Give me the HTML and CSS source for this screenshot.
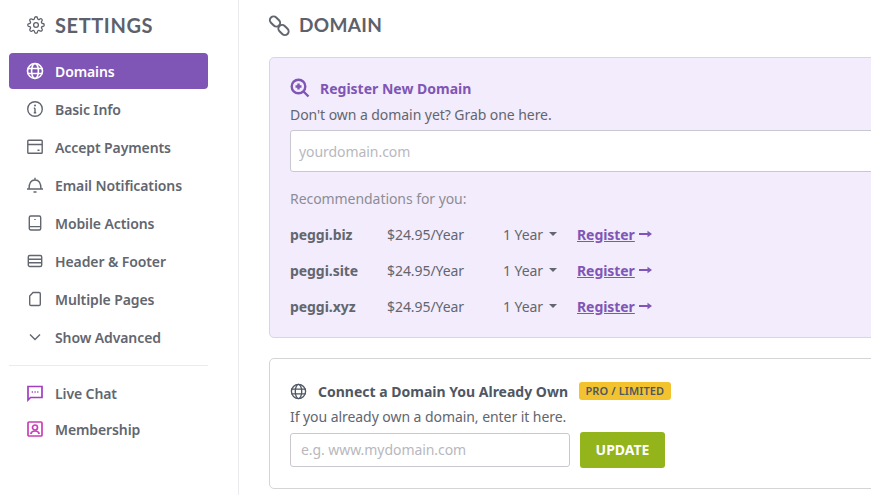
FILE: index.html
```html
<!DOCTYPE html>
<html lang="en">
<head>
<meta charset="utf-8">
<title>Settings - Domain</title>
<link rel="stylesheet" href="styles.css">
</head>
<body>
<div class="page">
  <aside class="sidebar">
    <h1 class="side-title">
      <svg class="ic title-ic" viewBox="0 0 24 24"><circle cx="12" cy="12" r="3.200"/><path d="M19.400 15a1.650 1.650 0 0 0 .33 1.820l.06.06a2 2 0 0 1 0 2.830 2 2 0 0 1-2.830 0l-.06-.06a1.650 1.650 0 0 0-1.820-.33 1.650 1.650 0 0 0-1 1.510V21a2 2 0 0 1-2 2 2 2 0 0 1-2-2v-.09A1.650 1.650 0 0 0 9 19.400a1.650 1.650 0 0 0-1.820.33l-.06.06a2 2 0 0 1-2.830 0 2 2 0 0 1 0-2.830l.06-.06a1.650 1.650 0 0 0 .33-1.820 1.650 1.650 0 0 0-1.510-1H3a2 2 0 0 1-2-2 2 2 0 0 1 2-2h.09A1.650 1.650 0 0 0 4.600 9a1.650 1.650 0 0 0-.33-1.820l-.06-.06a2 2 0 0 1 0-2.830 2 2 0 0 1 2.830 0l.06.06a1.650 1.650 0 0 0 1.820.33H9a1.650 1.650 0 0 0 1-1.510V3a2 2 0 0 1 2-2 2 2 0 0 1 2 2v.09a1.650 1.650 0 0 0 1 1.510 1.650 1.650 0 0 0 1.820-.33l.06-.06a2 2 0 0 1 2.830 0 2 2 0 0 1 0 2.830l-.06.06a1.650 1.650 0 0 0-.33 1.820V9a1.650 1.650 0 0 0 1.510 1H21a2 2 0 0 1 2 2 2 2 0 0 1-2 2h-.09a1.650 1.650 0 0 0-1.510 1z"/></svg>
      <span>SETTINGS</span>
    </h1>
    <nav class="nav">
      <a class="nav-item active">
        <svg class="ic ic-bold" viewBox="0 0 18 18"><circle cx="9" cy="9" r="7.500"/><ellipse cx="9" cy="9" rx="3.400" ry="7.500"/><path d="M1.500 6.500h15M1.500 11.500h15"/></svg>
        <span>Domains</span>
      </a>
      <a class="nav-item">
        <svg class="ic" viewBox="0 0 18 18"><circle cx="9" cy="9" r="7.300"/><path d="M9 8.200v4.600M7.800 8.200H9M7.800 12.800h2.400"/><circle class="dot" cx="9" cy="5.500" r="1"/></svg>
        <span>Basic Info</span>
      </a>
      <a class="nav-item">
        <svg class="ic" viewBox="0 0 18 18"><rect x="1.800" y="2.200" width="14.400" height="13" rx=".8"/><path d="M1.800 6.500h14.400M11.500 12.300h2"/></svg>
        <span>Accept Payments</span>
      </a>
      <a class="nav-item">
        <svg class="ic" viewBox="0 0 18 18"><path d="M1 13h16M3 13C3 7 5 4 9 4s6 3 6 9M9 1.800V4M7.500 16h3"/></svg>
        <span>Email Notifications</span>
      </a>
      <a class="nav-item">
        <svg class="ic" viewBox="0 0 18 18"><rect x="3.300" y="2" width="11.400" height="14" rx="1.500"/><path d="M3.300 12.600h11.400M9 5v1"/></svg>
        <span>Mobile Actions</span>
      </a>
      <a class="nav-item">
        <svg class="ic" viewBox="0 0 18 18"><rect x="2.300" y="3.500" width="13.400" height="11" rx="1.500"/><path d="M2.300 7.200h13.400M2.300 10.800h13.400"/></svg>
        <span>Header &amp; Footer</span>
      </a>
      <a class="nav-item">
        <svg class="ic" viewBox="0 0 18 18"><path d="M7 2.500h6a1.300 1.300 0 0 1 1.300 1.300v10.400a1.300 1.300 0 0 1-1.300 1.300H5a1.300 1.300 0 0 1-1.300-1.300V6z"/></svg>
        <span>Multiple Pages</span>
      </a>
      <a class="nav-item">
        <svg class="ic" viewBox="0 0 18 18"><path d="M4 6.500l5 5 5-5"/></svg>
        <span>Show Advanced</span>
      </a>
    </nav>
    <hr class="side-rule">
    <nav class="nav nav-extra">
      <a class="nav-item">
        <svg class="ic ic-chat" viewBox="0 0 18 18"><path d="M2 2.500h14v11H4.500L2 16z"/><path class="dots" d="M5.800 8h.9M8.600 8h.9M11.400 8h.9"/></svg>
        <span>Live Chat</span>
      </a>
      <a class="nav-item">
        <svg class="ic ic-member" viewBox="0 0 18 18"><rect x="2" y="2" width="14" height="14" rx="1"/><circle cx="9" cy="7.500" r="2.500"/><path d="M4.800 14c.4-2 2-3 4.200-3s3.800 1 4.200 3"/></svg>
        <span>Membership</span>
      </a>
    </nav>
  </aside>
  <main class="main">
    <h2 class="main-title">
      <svg class="link-ic" viewBox="0 0 21 21"><rect x="-5.700" y="-3.700" width="11.400" height="7.400" rx="3.700" transform="translate(6 6.500) rotate(45)"/><rect x="-5.700" y="-3.700" width="11.400" height="7.400" rx="3.700" transform="translate(14.500 15) rotate(45)"/></svg>
      <span>DOMAIN</span>
    </h2>
    <section class="card card-purple">
      <h3 class="card-head head-purple">
        <svg class="search-ic" viewBox="0 0 20 20"><circle cx="8.500" cy="8.500" r="6.800"/><path d="M13.500 13.500l5 5M8.500 5.500v6M5.500 8.500h6"/></svg>
        <span>Register New Domain</span>
      </h3>
      <p class="sub">Don't own a domain yet? Grab one here.</p>
      <input class="field field-wide" type="text" placeholder="yourdomain.com">
      <p class="rec-title">Recommendations for you:</p>
      <div class="rec-row">
        <b class="rec-name">peggi.biz</b><span class="rec-price">$24.95/Year</span>
        <span class="rec-term">1 Year<i class="caret"></i></span>
        <span class="rec-action"><a class="reg">Register</a><svg class="arrow" viewBox="0 0 13 8"><path d="M0 4h10"/><path class="arrow-head" d="M8.500 .8L13 4 8.500 7.200z"/></svg></span>
      </div>
      <div class="rec-row">
        <b class="rec-name">peggi.site</b><span class="rec-price">$24.95/Year</span>
        <span class="rec-term">1 Year<i class="caret"></i></span>
        <span class="rec-action"><a class="reg">Register</a><svg class="arrow" viewBox="0 0 13 8"><path d="M0 4h10"/><path class="arrow-head" d="M8.500 .8L13 4 8.500 7.200z"/></svg></span>
      </div>
      <div class="rec-row">
        <b class="rec-name">peggi.xyz</b><span class="rec-price">$24.95/Year</span>
        <span class="rec-term">1 Year<i class="caret"></i></span>
        <span class="rec-action"><a class="reg">Register</a><svg class="arrow" viewBox="0 0 13 8"><path d="M0 4h10"/><path class="arrow-head" d="M8.500 .8L13 4 8.500 7.200z"/></svg></span>
      </div>
    </section>
    <section class="card card-plain">
      <h3 class="card-head head-dark">
        <svg class="ic globe-ic" viewBox="0 0 18 18"><circle cx="9" cy="9" r="7.500"/><ellipse cx="9" cy="9" rx="3.400" ry="7.500"/><path d="M1.500 6.500h15M1.500 11.500h15"/></svg>
        <span>Connect a Domain You Already Own</span>
        <em class="badge">PRO / LIMITED</em>
      </h3>
      <p class="sub sub-plain">If you already own a domain, enter it here.</p>
      <div class="connect-row">
        <input class="field field-small" type="text" placeholder="e.g. www.mydomain.com">
        <button class="btn" type="button">UPDATE</button>
      </div>
    </section>
  </main>
</div>
</body>
</html>
```
FILE: styles.css
```css
* { box-sizing: border-box; }
html, body { margin: 0; height: 100%; overflow: hidden; background: #fff; }
body { font-family: "Noto Sans", "Open Sans", sans-serif; color: #62666f; font-size: 14px; letter-spacing: -.06px; }
.page { display: flex; width: 871px; height: 495px; overflow: hidden; }

.sidebar { width: 239px; flex: none; padding: 13px 30px 0 9px; border-right: 1px solid #ebebee; }
.side-title { display: flex; align-items: center; gap: 10px; margin: 0 0 16px; padding-left: 18px; height: 24px; font: 700 20px/24px "Lato", sans-serif; letter-spacing: .6px; color: #5d616b; }
.ic { width: 18px; height: 18px; flex: none; fill: none; stroke: currentColor; stroke-width: 1.400; }
.ic-bold { stroke-width: 1.600; }
.title-ic { width: 18px; height: 18px; stroke-width: 1.700; }
.dot { fill: currentColor; stroke: none; }

.nav { display: flex; flex-direction: column; gap: 2px; }
.nav-item { display: flex; align-items: center; gap: 11px; height: 36px; padding-left: 17px; border-radius: 4px; font-weight: 600; font-size: 14px; letter-spacing: -.1px; color: #62666f; }
.nav-item.active { background: #7f56b5; color: #fff; }
.side-rule { height: 1px; margin: 10px 0 9px; border: 0; background: #ebebee; }
.nav-extra { gap: 0; }
.ic-chat { stroke: #a03fc0; stroke-width: 1.700; }
.ic-member { stroke: #c93fb8; stroke-width: 1.700; }
.dots { stroke-width: 1.800; }

.main { flex: none; width: 800px; padding: 12px 0 0 30px; }
.main-title { display: flex; align-items: center; gap: 9px; margin: 0 0 19px; height: 26px; font: 700 19px/26px "Lato", sans-serif; letter-spacing: .35px; color: #5d616b; }
.link-ic { width: 21px; height: 21px; flex: none; fill: none; stroke: #62666f; stroke-width: 2; overflow: visible; }

.card { border-radius: 5px; }
.card-purple { height: 281px; padding: 19px 20px 0; background: #f3ecfc; border: 1px solid #dcd3eb; }
.card-plain { height: 131px; margin-top: 20px; padding: 21px 20px 0; border: 1px solid #d5d5d8; width: 800px; }
.card-head { display: flex; align-items: center; margin: 0; font-size: 14px; font-weight: 700; height: 22px; letter-spacing: 0; }
.head-purple { color: #7f56b5; gap: 10px; }
.head-dark { color: #4f5763; gap: 11px; }
.search-ic { width: 20px; height: 20px; fill: none; stroke: #7f56b5; stroke-width: 2.400; }
.globe-ic { width: 17px; height: 17px; }
.sub { margin: 6px 0 5px; font-size: 14px; line-height: 20px; color: #62666f; }
.sub-plain { margin: 5px 0 5px; }
.field { display: block; height: 42px; padding: 0 8px; background: #fff; border: 1px solid #c9c7d0; border-radius: 3px; font: 14px "Noto Sans", sans-serif; letter-spacing: -.06px; color: #62666f; outline: 0; }
.field::placeholder { color: #b8b8be; opacity: 1; }
.field-wide { width: 700px; }
.field-small { width: 280px; height: 34px; padding: 0 10px 2px; }

.rec-title { margin: 17px 0 7px; line-height: 20px; color: #8c8d96; }
.rec-row { display: grid; grid-template-columns: 97px 116px 74px 1fr; align-items: center; height: 36px; }
.rec-name { font-weight: 700; color: #62666f; }
.rec-term { display: flex; align-items: center; }
.caret { margin-left: 6px; border-left: 4px solid transparent; border-right: 4px solid transparent; border-top: 4px solid #62666f; }
.rec-action { display: flex; align-items: center; gap: 4px; }
.reg { color: #7f56b5; font-weight: 700; text-decoration: underline; }
.arrow { width: 13px; height: 8px; fill: none; stroke: #7f56b5; stroke-width: 2; }
.arrow-head { fill: #7f56b5; stroke: none; }

.badge { display: block; padding: 0 6.500px; height: 18px; background: #f3c32f; border-radius: 3px; font: 600 11px/18px "Noto Sans", sans-serif; letter-spacing: .1px; color: #4f5763; }
.connect-row { display: flex; align-items: center; gap: 10px; }
.btn { width: 85px; height: 36px; padding: 0 0 2px; border: 0; border-radius: 3px; background: #93b51b; color: #fff; font: 700 14px "Noto Sans", sans-serif; }
```
